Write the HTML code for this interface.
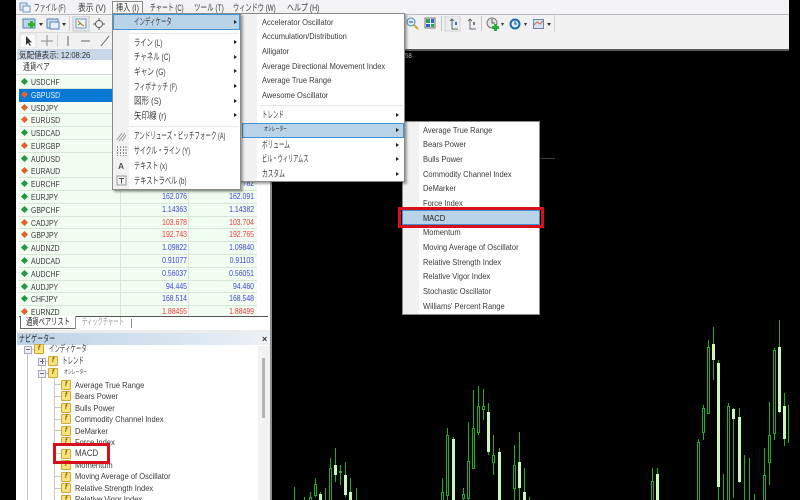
<!DOCTYPE html>
<html lang="ja"><head><meta charset="utf-8"><title>MT4</title>
<style>
html,body{margin:0;padding:0;background:#000}
#r{position:relative;width:800px;height:500px;overflow:hidden;background:#000;font-family:"Liberation Sans","Noto Sans CJK JP",sans-serif;font-size:8.6px;color:#3a3a3a;filter:blur(.3px)}
#r div,#r span,#r svg{position:absolute}
.t{white-space:nowrap;line-height:12px;height:12px;transform:scaleX(calc(var(--s,.875)*var(--k,1)));transform-origin:0 50%}
.jp{font-size:9.4px;--s:.68;--k:.894}
.os{font-size:6.2px;--s:.62}
.row{left:19px;width:238px;height:12.8px;background:#f0fdf0;border-bottom:1px solid #d5e6d5;box-sizing:border-box}
.sym{position:absolute;left:12px;top:0;line-height:12px;font-size:8.6px;color:#3a3a3a;transform:scaleX(.8);transform-origin:0 50%}
.d{position:absolute;left:3px;top:3px;width:5px;height:5px;transform:rotate(45deg);background:#1f9a3c}
.d.o{background:#e0622c}
.b,.a{position:absolute;top:0;line-height:12px;text-align:right;font-size:8.2px;color:#3d46d8;width:60px;transform:scaleX(.84);transform-origin:100% 50%}
.b{left:108px}.a{left:175px}
.red{color:#ec3b3b}
.cl{position:absolute;left:101px;top:0;width:1px;height:12px;background:#d5e6d5}
.cl2{position:absolute;left:169px;top:0;width:1px;height:12px;background:#d5e6d5}
.menu{background:#fff;border:1px solid #8a8a8a;box-shadow:2px 2px 2px rgba(0,0,0,.35);box-sizing:border-box}
.gut{background:#f1f1f1;top:0;bottom:0;left:0}
.hl{background:#b9d3e9;border:1px solid #3f93d2;box-sizing:border-box}
.ar{width:0;height:0;border-left:3px solid #222;border-top:2.5px solid transparent;border-bottom:2.5px solid transparent}
.sep{height:1px;background:#e6e6e6}
.ic{width:10px;height:10px;background:#f7e37a;border:1px solid #d0a93a;box-sizing:border-box;border-radius:1px;color:#8a6a00;font:italic bold 7px/8px "Liberation Sans",sans-serif;text-align:center}
.tree{background:#c2ccc2}
.rb{border:3px solid #d9101c;box-sizing:border-box}
</style></head><body><div id="r">

<!-- window background -->
<div style="left:16px;top:0;width:773px;height:14px;background:#f3f3f5"></div>
<div style="left:16px;top:14px;width:773px;height:1px;background:#b9b9b9"></div>
<div style="left:16px;top:15px;width:773px;height:34px;background:#f1f1f1"></div>
<div style="left:16px;top:49px;width:773px;height:1.5px;background:#5a5a5a"></div>

<!-- menu bar -->
<svg style="left:19px;top:2px" width="12" height="11"><rect x="1" y="1" width="7" height="7" fill="#dbe9f6" stroke="#6b97c2"/><rect x="4" y="4" width="7" height="6" fill="#eef5fb" stroke="#6b97c2"/></svg>
<div class="t jp" style="left:34px;top:2px">ファイル (F)</div>
<div class="t jp" style="left:78px;top:2px;--s:.92">表示 (V)</div>
<div style="left:112px;top:1px;width:31px;height:13px;background:#f5f5f5;border:1px solid #8a8a8a;box-sizing:border-box"></div>
<div class="t jp" style="left:116px;top:2px;--s:.85">挿入 (I)</div>
<div class="t jp" style="left:150px;top:2px;--s:.71">チャート (C)</div>
<div class="t jp" style="left:194px;top:2px;--s:.78">ツール (T)</div>
<div class="t jp" style="left:233px;top:2px;--s:.74">ウィンドウ (W)</div>
<div class="t jp" style="left:287px;top:2px;--s:.83">ヘルプ (H)</div>

<!-- toolbar row 1 -->
<svg style="left:20px;top:16px" width="96" height="16">
<rect x="3" y="3" width="12" height="9" fill="#bcd4ea" stroke="#4f82b5"/><rect x="8" y="7" width="7" height="3" fill="#2fb12f"/><rect x="10" y="5" width="3" height="7" fill="#2fb12f"/>
<path d="M19 7h4l-2 3z" fill="#333"/>
<rect x="27" y="3" width="11" height="9" fill="#cfe0f0" stroke="#4f82b5"/><rect x="30" y="6" width="9" height="7" fill="#e8f1f9" stroke="#4f82b5"/>
<path d="M42 7h4l-2 3z" fill="#333"/>
<rect x="49" y="0" width="1" height="15" fill="#cfcfcf"/>
<rect x="53" y="0" width="16" height="15" fill="#e4e9ee" stroke="#c8c8c8"/>
<rect x="56" y="3" width="10" height="9" fill="#eef5e8" stroke="#6b97c2"/><path d="M58 5l3 3 3 2" stroke="#d85a2a" fill="none"/><path d="M58 9l3-2" stroke="#2fa13f"/>
<circle cx="79" cy="8" r="3.5" fill="#eee" stroke="#666"/><path d="M79 2v3M79 11v3M73 8h3M82 8h3" stroke="#555"/>
</svg>
<!-- toolbar right -->
<svg style="left:405px;top:16px" width="150" height="17">
<circle cx="6" cy="6" r="4" fill="#d8ecf6" stroke="#4c8db0"/><path d="M9 9l4 4" stroke="#d9a43a" stroke-width="2"/><path d="M4 6h4" stroke="#444"/>
<rect x="20" y="2" width="10" height="10" fill="#eee" stroke="#777"/><rect x="21" y="3" width="4" height="4" fill="#2f9f4f"/><rect x="26" y="3" width="3" height="4" fill="#2b66c8"/><rect x="21" y="8" width="4" height="3" fill="#2b66c8"/><rect x="26" y="8" width="3" height="3" fill="#2f9f4f"/>
<rect x="36" y="0" width="1" height="15" fill="#c5c5c5"/>
<rect x="40" y="0" width="15" height="15" fill="#e9edf1" stroke="#d2d2d2"/>
<path d="M47 3v10h6M45 5l2-2 2 2" stroke="#54734f" fill="none"/><path d="M51 6v3" stroke="#3a6fc0" stroke-width="2"/>
<path d="M65 3v10h6M63 5l2-2 2 2" stroke="#667" fill="none"/><path d="M69 6v3" stroke="#777" stroke-width="2"/>
<rect x="76" y="0" width="1" height="15" fill="#c5c5c5"/>
<circle cx="87" cy="7" r="5" fill="#e6e6e6" stroke="#777"/><path d="M87 3v4h3" stroke="#555" fill="none"/><rect x="87" y="10" width="7" height="3" fill="#28ad3a"/><rect x="89" y="8" width="3" height="7" fill="#28ad3a"/>
<path d="M96 7h3l-1.500 3z" fill="#333"/>
<circle cx="110" cy="8" r="4.500" fill="#dcecf8" stroke="#1d6aa8" stroke-width="2"/><path d="M110 5v3h2" stroke="#1a4f80" fill="none"/>
<path d="M119 7h3l-1.500 3z" fill="#333"/>
</svg>
<svg style="left:533px;top:18px" width="20" height="13"><rect x=".5" y="1.500" width="10" height="9" fill="#d8e2ef" stroke="#6b87aa"/><path d="M1 7l3-3 3 2 3-3" stroke="#cb6c4a" fill="none"/><path d="M14 5h4l-2 3z" fill="#333"/></svg>
<div style="left:554px;top:15px;width:1px;height:17px;background:#d5d5d5"></div>

<!-- toolbar row 2 -->
<div style="left:20px;top:32px;width:115px;height:1px;background:#dcdcdc"></div>
<svg style="left:18px;top:33px" width="100" height="15">
<rect x="2" y="1" width="16" height="14" fill="#fafafa" stroke="#ddd"/>
<path d="M8 3v9l2-2 2 3 1-.6-2-3h3z" fill="#333"/>
<path d="M29 2v11M23 8h12" stroke="#8a8a8a"/>
<rect x="39" y="1" width="1" height="13" fill="#cfcfcf"/>
<path d="M50 3v10" stroke="#666"/>
<path d="M63 8h9" stroke="#666"/>
<path d="M83 13l8-10" stroke="#666"/>
</svg>

<!-- left panel bg -->
<div style="left:16px;top:49px;width:254px;height:451px;background:#fff"></div>
<div style="left:270px;top:50px;width:2px;height:450px;background:#8f8f8f"></div>

<!-- market watch -->
<div style="left:17px;top:49px;width:253px;height:11px;background:#c8d8e8"></div>
<div class="t" style="left:19px;top:49px;color:#333;font-size:8.4px;--s:.9">気配値表示: 12:08:26</div>
<div style="left:17px;top:60px;width:253px;height:15px;background:#fff;border-bottom:1px solid #d8d8d8;box-sizing:border-box"></div>
<div class="t jp" style="left:23px;top:61px;--s:.8">通貨ペア</div>

<div class="row" style="top:76px"><i class="d"></i><span class="sym">USDCHF</span></div>
<div class="row" style="top:88.8px;background:#0a78d7;border-color:#0a78d7"><i class="d o"></i><span class="sym" style="color:#eaf3fb">GBPUSD</span></div>
<div class="row" style="top:101.6px"><i class="d o"></i><span class="sym">USDJPY</span></div>
<div class="row" style="top:114.4px"><i class="d o"></i><span class="sym">EURUSD</span></div>
<div class="row" style="top:127.2px"><i class="d"></i><span class="sym">USDCAD</span></div>
<div class="row" style="top:140px"><i class="d o"></i><span class="sym">EURGBP</span></div>
<div class="row" style="top:152.8px"><i class="d"></i><span class="sym">AUDUSD</span></div>
<div class="row" style="top:165.4px"><i class="d o"></i><span class="sym">EURAUD</span></div>
<div class="row" style="top:178.2px"><i class="d"></i><span class="sym">EURCHF</span><span class="cl"></span><span class="cl2"></span><span class="a">1.07782</span></div>
<div class="row" style="top:191px"><i class="d"></i><span class="sym">EURJPY</span><span class="cl"></span><span class="cl2"></span><span class="b">162.076</span><span class="a">162.091</span></div>
<div class="row" style="top:203.8px"><i class="d"></i><span class="sym">GBPCHF</span><span class="cl"></span><span class="cl2"></span><span class="b">1.14363</span><span class="a">1.14382</span></div>
<div class="row" style="top:216.6px"><i class="d o"></i><span class="sym">CADJPY</span><span class="cl"></span><span class="cl2"></span><span class="b red">103.678</span><span class="a red">103.704</span></div>
<div class="row" style="top:229.4px"><i class="d o"></i><span class="sym">GBPJPY</span><span class="cl"></span><span class="cl2"></span><span class="b red">192.743</span><span class="a red">192.765</span></div>
<div class="row" style="top:242.2px"><i class="d"></i><span class="sym">AUDNZD</span><span class="cl"></span><span class="cl2"></span><span class="b">1.09822</span><span class="a">1.09840</span></div>
<div class="row" style="top:255px"><i class="d"></i><span class="sym">AUDCAD</span><span class="cl"></span><span class="cl2"></span><span class="b">0.91077</span><span class="a">0.91103</span></div>
<div class="row" style="top:267.8px"><i class="d"></i><span class="sym">AUDCHF</span><span class="cl"></span><span class="cl2"></span><span class="b">0.56037</span><span class="a">0.56051</span></div>
<div class="row" style="top:280.6px"><i class="d"></i><span class="sym">AUDJPY</span><span class="cl"></span><span class="cl2"></span><span class="b">94.445</span><span class="a">94.460</span></div>
<div class="row" style="top:293.4px"><i class="d"></i><span class="sym">CHFJPY</span><span class="cl"></span><span class="cl2"></span><span class="b">168.514</span><span class="a">168.548</span></div>
<div class="row" style="top:306.2px;height:11px;border:0"><i class="d o"></i><span class="sym">EURNZD</span><span class="cl"></span><span class="cl2"></span><span class="b red">1.88455</span><span class="a red">1.88499</span></div>

<!-- tabs -->
<div style="left:19px;top:316px;width:249px;height:1px;background:#555"></div>
<div style="left:20px;top:316px;width:56px;height:13px;background:#fff;border-left:1px solid #666;border-right:1px solid #999;border-bottom:1px solid #666;box-sizing:border-box"></div>
<div class="t jp" style="left:26px;top:316px;color:#222;--s:.75">通貨ペアリスト</div>
<div class="t jp" style="left:82px;top:316px;color:#999;--s:.63">ティックチャート</div>
<div style="left:131px;top:319px;width:1px;height:9px;background:#888"></div>
<div style="left:16px;top:330px;width:254px;height:3px;background:#ececec"></div>

<!-- navigator -->
<div style="left:17px;top:333px;width:253px;height:12px;background:linear-gradient(90deg,#bcd2e6,#dbe7f1 70%,#eef2f6)"></div>
<div class="t jp" style="left:19px;top:333px;color:#222;--s:.72">ナビゲーター</div>
<div class="t" style="left:262px;top:333px;font-size:9px;font-weight:bold;color:#333;--s:1">×</div>
<div style="left:258px;top:346px;width:12px;height:154px;background:#f2f2f2"></div>
<div style="left:262px;top:358px;width:2.500px;height:60px;background:#b5b5b5"></div>

<div class="tree" style="left:27px;top:352px;width:1px;height:148px"></div>
<div class="tree" style="left:41px;top:365px;width:1px;height:135px"></div>
<div class="tree" style="left:54px;top:378px;width:1px;height:122px"></div>
<div class="tree" style="left:30px;top:349px;width:5px;height:1px"></div>
<div class="tree" style="left:44px;top:361px;width:5px;height:1px"></div>
<div class="tree" style="left:44px;top:373px;width:5px;height:1px"></div>
<div style="left:24px;top:346px;width:6px;height:6px;background:#eef;border:1px solid #aab"></div>
<div style="left:26px;top:349px;width:4px;height:1px;background:#667"></div>
<div style="left:38px;top:358px;width:6px;height:6px;background:#eef;border:1px solid #aab"></div>
<div style="left:40px;top:361px;width:4px;height:1px;background:#667"></div>
<div style="left:41.500px;top:359px;width:1px;height:5px;background:#667"></div>
<div style="left:38px;top:370px;width:6px;height:6px;background:#eef;border:1px solid #aab"></div>
<div style="left:40px;top:373px;width:4px;height:1px;background:#667"></div>

<div class="ic" style="left:34px;top:344px">f</div><div class="t jp" style="left:49px;top:343px;--s:.65">インディケータ</div>
<div class="ic" style="left:48px;top:356px">f</div><div class="t jp" style="left:62px;top:355px;--s:.65">トレンド</div>
<div class="ic" style="left:48px;top:368px">f</div><div class="t os" style="left:64px;top:367px">オシレーター</div>

<div class="tree" style="left:55px;top:384px;width:6px;height:1px"></div><div class="ic" style="left:61px;top:380px">f</div><div class="t" style="left:75px;top:379px">Average True Range</div>
<div class="tree" style="left:55px;top:396px;width:6px;height:1px"></div><div class="ic" style="left:61px;top:391px">f</div><div class="t" style="left:75px;top:390px">Bears Power</div>
<div class="tree" style="left:55px;top:407px;width:6px;height:1px"></div><div class="ic" style="left:61px;top:403px">f</div><div class="t" style="left:75px;top:402px">Bulls Power</div>
<div class="tree" style="left:55px;top:419px;width:6px;height:1px"></div><div class="ic" style="left:61px;top:414px">f</div><div class="t" style="left:75px;top:413px">Commodity Channel Index</div>
<div class="tree" style="left:55px;top:430px;width:6px;height:1px"></div><div class="ic" style="left:61px;top:426px">f</div><div class="t" style="left:75px;top:425px">DeMarker</div>
<div class="ic" style="left:61px;top:437px">f</div><div class="t" style="left:75px;top:436px">Force Index</div>
<div style="left:53px;top:444px;width:57px;height:20px;background:#fff"></div>
<div class="tree" style="left:56px;top:453px;width:5px;height:1px"></div><div class="ic" style="left:61px;top:449px">f</div><div class="t" style="left:75px;top:447px;font-size:9px">MACD</div>
<div class="ic" style="left:61px;top:460px">f</div><div class="t" style="left:75px;top:459px">Momentum</div>
<div class="tree" style="left:55px;top:476px;width:6px;height:1px"></div><div class="ic" style="left:61px;top:472px">f</div><div class="t" style="left:75px;top:470px">Moving Average of Oscillator</div>
<div class="tree" style="left:55px;top:488px;width:6px;height:1px"></div><div class="ic" style="left:61px;top:483px">f</div><div class="t" style="left:75px;top:482px">Relative Strength Index</div>
<div class="ic" style="left:61px;top:495px">f</div><div class="t" style="left:75px;top:493px">Relative Vigor Index</div>
<div class="rb" style="left:53px;top:443px;width:57px;height:21px"></div>

<!-- chart -->
<div class="t" style="left:405px;top:51px;color:#bbb;font-size:7px">58</div>
<div style="left:540px;top:158px;width:15px;height:1px;background:#444"></div>
<svg style="left:272px;top:300px" width="517" height="200" viewBox="272 300 517 200">
<g stroke="#1fae1f" stroke-width="1" fill="none">
<path d="M294.500 487V500M304.500 497V500M310.500 492V500M315.500 478V497M320.500 492V500M325.500 488V500M330.500 458V500M335.500 448V482M340.500 465V485M345.500 462V497M350.500 478V500M356.500 488V500M442.500 478V500M447.500 428V500M453.500 437V500M463.500 488V500M468.500 422V500M473.500 390V468M478.500 386V435M483.500 389V420M488.500 403V455M493.500 435V475M499.500 448V500M514.500 445V500M519.500 432V500M524.500 468V500M529.500 497V500M652.500 468V500M657.500 468V500M698.500 439V500M703.500 405V440M708.500 340V413M713.500 327V380M718.500 360V500M723.500 474V500M728.500 403V500M733.500 408V498M739.500 408V483M744.500 455V500M749.500 458V500M754.500 494V500M764.500 448V500M769.500 402V485M774.500 348V440M779.500 320V413M784.500 393V446M788.500 405V443"/>
<g fill="#000"><rect x="309.500" y="497.500" width="2" height="3"/><rect x="314.500" y="484.500" width="2" height="11"/><rect x="329.500" y="468.500" width="2" height="32"/><rect x="339.500" y="471.500" width="2" height="1"/><rect x="441.500" y="492.500" width="2" height="8"/><rect x="446.500" y="435.500" width="2" height="60"/><rect x="462.500" y="494.500" width="2" height="4"/><rect x="467.500" y="461.500" width="2" height="37"/><rect x="472.500" y="428.500" width="2" height="40"/><rect x="477.500" y="406.500" width="2" height="26"/><rect x="482.500" y="406.500" width="2" height="3"/><rect x="492.500" y="455.500" width="2" height="7"/><rect x="513.500" y="465.500" width="2" height="23"/><rect x="651.500" y="481.500" width="2" height="19"/><rect x="697.500" y="442.500" width="2" height="58"/><rect x="702.500" y="408.500" width="2" height="24"/><rect x="707.500" y="347.500" width="2" height="66"/><rect x="727.500" y="406.500" width="2" height="94"/><rect x="763.500" y="475.500" width="2" height="25"/><rect x="768.500" y="435.500" width="2" height="27"/><rect x="773.500" y="350.500" width="2" height="83"/></g>
</g>
<g fill="#c8f8bc">
<rect x="319" y="494" width="3" height="6"/><rect x="334" y="465" width="3" height="10"/><rect x="344" y="475" width="3" height="20"/><rect x="349" y="492" width="3" height="8"/><rect x="452" y="439" width="3" height="61"/><rect x="487" y="412" width="3" height="40"/><rect x="498" y="452" width="3" height="48"/><rect x="518" y="462" width="3" height="26"/><rect x="523" y="492" width="3" height="8"/><rect x="656" y="474" width="3" height="26"/><rect x="712" y="344" width="3" height="16"/><rect x="717" y="363" width="3" height="124"/><rect x="732" y="409" width="3" height="10"/><rect x="738" y="417" width="3" height="65"/><rect x="778" y="347" width="3" height="65"/><rect x="783" y="406" width="3" height="33"/>
</g>
</svg>

<!-- menu 3 -->
<div class="menu" style="left:402px;top:121px;width:138px;height:194px"><div class="gut" style="width:16px"></div></div>
<div class="t" style="left:423px;top:124px">Average True Range</div>
<div class="t" style="left:423px;top:138px">Bears Power</div>
<div class="t" style="left:423px;top:153px">Bulls Power</div>
<div class="t" style="left:423px;top:168px">Commodity Channel Index</div>
<div class="t" style="left:423px;top:182px">DeMarker</div>
<div class="t" style="left:423px;top:197px">Force Index</div>
<div class="hl" style="left:402px;top:210px;width:138px;height:15px"></div>
<div class="t" style="left:423px;top:212px;color:#222">MACD</div>
<div class="t" style="left:423px;top:226px">Momentum</div>
<div class="t" style="left:423px;top:241px">Moving Average of Oscillator</div>
<div class="t" style="left:423px;top:256px">Relative Strength Index</div>
<div class="t" style="left:423px;top:270px">Relative Vigor Index</div>
<div class="t" style="left:423px;top:285px">Stochastic Oscillator</div>
<div class="t" style="left:423px;top:300px">Williams' Percent Range</div>
<div class="rb" style="left:398px;top:207px;width:146px;height:21px"></div>

<!-- menu 2 -->
<div class="menu" style="left:240px;top:13px;width:165px;height:169px"><div class="gut" style="width:16px"></div></div>
<div class="t" style="left:262px;top:16px">Accelerator Oscillator</div>
<div class="t" style="left:262px;top:30px">Accumulation/Distribution</div>
<div class="t" style="left:262px;top:45px">Alligator</div>
<div class="t" style="left:262px;top:60px">Average Directional Movement Index</div>
<div class="t" style="left:262px;top:74px">Average True Range</div>
<div class="t" style="left:262px;top:89px">Awesome Oscillator</div>
<div class="sep" style="left:258px;top:105px;width:145px"></div>
<div class="t jp" style="left:262px;top:109px;--s:.65">トレンド</div><div class="ar" style="left:396px;top:113px"></div>
<div class="hl" style="left:242px;top:123px;width:162px;height:15px"></div>
<div class="t os" style="left:264px;top:124px;color:#222">オシレーター</div><div class="ar" style="left:396px;top:128px"></div>
<div class="t jp" style="left:262px;top:139px;--s:.67">ボリューム</div><div class="ar" style="left:396px;top:143px"></div>
<div class="t jp" style="left:262px;top:153px;--s:.62">ビル・ウィリアムス</div><div class="ar" style="left:396px;top:157px"></div>
<div class="t jp" style="left:262px;top:168px;--s:.68">カスタム</div><div class="ar" style="left:396px;top:172px"></div>

<!-- menu 1 -->
<div class="menu" style="left:112px;top:13px;width:129px;height:177px"><div class="gut" style="width:16px"></div></div>
<div class="hl" style="left:113px;top:14px;width:127px;height:16px"></div>
<div class="t jp" style="left:134px;top:16px;--s:.65">インディケータ</div><div class="ar" style="left:234px;top:20px"></div>
<div class="sep" style="left:129px;top:33px;width:110px"></div>
<div class="t jp" style="left:134px;top:37px;--s:.75">ライン (L)</div><div class="ar" style="left:234px;top:40px"></div>
<div class="t jp" style="left:134px;top:51px;--s:.77">チャネル (C)</div><div class="ar" style="left:234px;top:55px"></div>
<div class="t jp" style="left:134px;top:66px;--s:.8">ギャン (G)</div><div class="ar" style="left:234px;top:69px"></div>
<div class="t jp" style="left:134px;top:81px;--s:.68">フィボナッチ (F)</div><div class="ar" style="left:234px;top:84px"></div>
<div class="t jp" style="left:134px;top:95px;--s:.9">図形 (S)</div><div class="ar" style="left:234px;top:99px"></div>
<div class="t jp" style="left:134px;top:110px;--s:.9">矢印線 (r)</div><div class="ar" style="left:234px;top:113px"></div>
<div class="sep" style="left:129px;top:126px;width:110px"></div>
<svg style="left:116px;top:131px" width="11" height="11"><path d="M1 9l5-7M3 10l6-8M6 10l4-6" stroke="#999" fill="none"/></svg>
<div class="t jp" style="left:134px;top:130px;--s:.66">アンドリューズ・ピッチフォーク (A)</div>
<svg style="left:116px;top:145px" width="11" height="12"><path d="M1.500 1v10M4.500 1v10M7.500 1v10M10 1v10" stroke="#888" stroke-dasharray="2 1" fill="none"/></svg>
<div class="t jp" style="left:134px;top:145px;--s:.7">サイクル・ライン (Y)</div>
<div class="t" style="left:118px;top:160px;font-weight:bold;color:#555;font-size:8.500px;--s:1">A</div>
<div class="t jp" style="left:134px;top:160px;--s:.73">テキスト (x)</div>
<svg style="left:116px;top:175px" width="12" height="12"><rect x="1" y="1" width="9" height="9" fill="#f4f4f4" stroke="#999"/><path d="M3 3.500h5M5.500 3.500v5" stroke="#555"/></svg>
<div class="t jp" style="left:134px;top:175px;--s:.74">テキストラベル (b)</div>

</div></body></html>
